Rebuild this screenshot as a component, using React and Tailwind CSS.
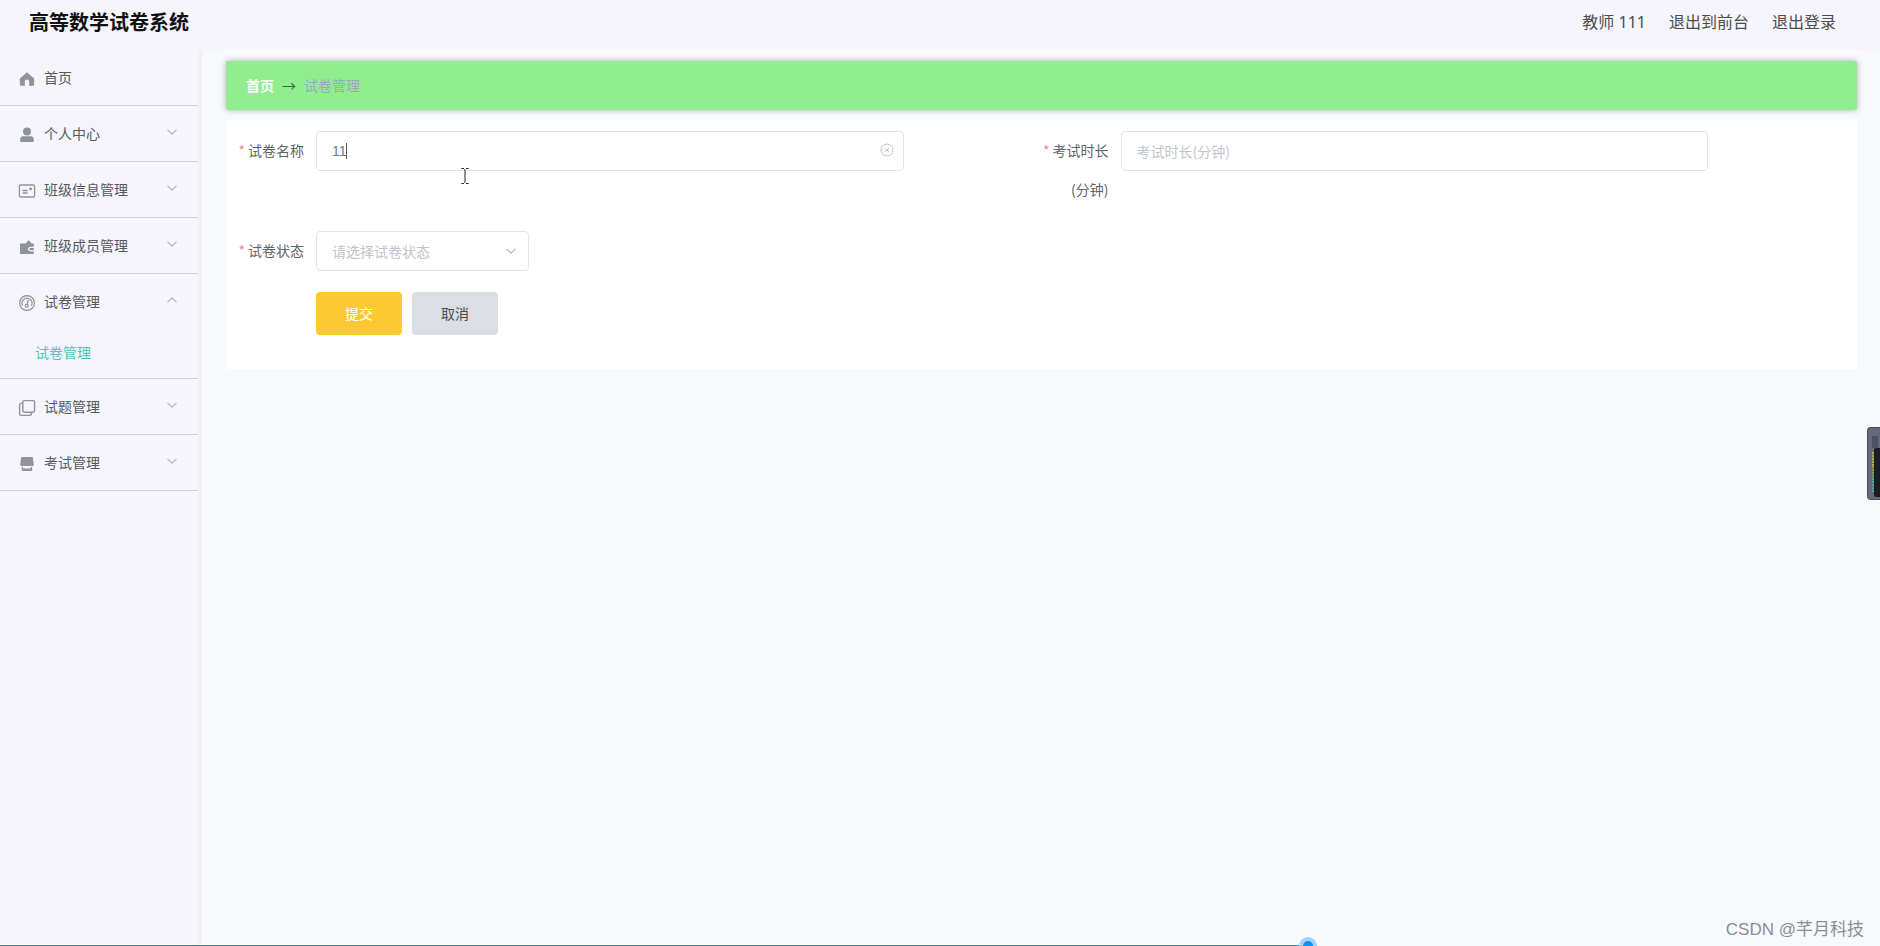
import React from "react";

const icons = {
  home: (
    <path fill="currentColor" d="M9 2.2 1.9 8.4v6.4c0 .7.4 1 1 1h3.9v-4.1c0-1.4.9-2.2 2.2-2.2s2.2.8 2.2 2.2v4.1h3.9c.6 0 1-.3 1-1V8.4z" />
  ),
  user: (
    <g fill="currentColor">
      <circle cx="9" cy="5.4" r="4" />
      <path d="M2.2 13.2c0-1.9 1.3-3 3.2-3h7.2c1.9 0 3.2 1.1 3.2 3v1.5c0 .8-.4 1.2-1.2 1.2H3.4c-.8 0-1.2-.4-1.2-1.2z" />
    </g>
  ),
  card: (
    <g fill="none" stroke="currentColor" strokeWidth="1.3">
      <rect x="1.4" y="3" width="15.2" height="12" rx="1.2" />
      <path d="M4.6 8.5h5M4.6 11h5" />
      <rect x="12" y="6.3" width="1.2" height="1.2" fill="currentColor" />
    </g>
  ),
  wallet: (
    <path
      fill="currentColor"
      fillRule="evenodd"
      d="M2 5.6h5.5L10.6 2.2l3 3v.4H15.8v3.2h-3.2c-1.7 0-2.7 1-2.7 2.3s1 2.3 2.7 2.3h3.2V15c0 .6-.3 1-1 1H3c-.7 0-1-.4-1-1zM12.6 9.9h3.2v2.4h-3.2c-.8 0-1.3-.5-1.3-1.2s.5-1.2 1.3-1.2z"
    />
  ),
  gauge: (
    <g fill="none" stroke="currentColor" strokeWidth="1.2">
      <circle cx="9" cy="9" r="7.4" />
      <path d="M4.7 11.8a5 5 0 1 1 8.6 0" />
      <circle cx="8.7" cy="11.8" r="1.5" />
      <path d="M9.1 10.3 10.3 6" />
    </g>
  ),
  copy: (
    <g fill="none" stroke="currentColor" strokeWidth="1.4">
      <rect x="4.8" y="1.6" width="11.8" height="11.6" rx="1.6" />
      <path d="M4.6 4.4H3.4a1.8 1.8 0 0 0-1.8 1.8v8.4a1.8 1.8 0 0 0 1.8 1.8h8.2a1.8 1.8 0 0 0 1.8-1.8v-1" />
    </g>
  ),
  shop: (
    <g fill="currentColor">
      <path d="M3.3 2h11.4l1.1 7.2c0 1-.6 1.8-1.5 1.8H3.7c-.9 0-1.5-.8-1.5-1.8z" />
      <path d="M3.8 12h1.4v1.5h7.6V12h1.4v3c0 .6-.3.9-.8.9H4.6c-.5 0-.8-.3-.8-.9z" />
    </g>
  ),
};

function Chevron({ up = false, className = "" }) {
  return (
    <svg viewBox="0 0 12 12" className={"h-3 w-3 text-[#b0b3bb] " + className} fill="none" stroke="currentColor" strokeWidth="1.1" aria-hidden="true">
      <path d={up ? "M1.5 8.2 6 3.8l4.5 4.4" : "M1.5 3.8 6 8.2l4.5-4.4"} />
    </svg>
  );
}

const menu = [
  { icon: "home", text: "首页", leaf: true },
  { icon: "user", text: "个人中心" },
  { icon: "card", text: "班级信息管理" },
  { icon: "wallet", text: "班级成员管理" },
  { icon: "gauge", text: "试卷管理", children: ["试卷管理"] },
  { icon: "copy", text: "试题管理" },
  { icon: "shop", text: "考试管理" },
];

function Sidebar() {
  return (
    <nav className="w-[202px] shrink-0 border-r-4 border-[#f0f0f3]">
      <ul>
        {menu.map((item) => (
          <li key={item.text} className="border-b border-[#cfcfd9]">
            <button type="button" aria-expanded={item.leaf ? undefined : Boolean(item.children)} className="flex h-[55px] w-full items-center pr-5 pb-[2px] pl-[18px] text-left text-[#56585d]">
              <svg viewBox="0 0 18 18" className="mt-1 mr-2 h-[18px] w-[18px] text-[#909399]" aria-hidden="true">
                {icons[item.icon]}
              </svg>
              <span className="grow">{item.text}</span>
              {!item.leaf && <Chevron up={Boolean(item.children)} className="mb-[2px]" />}
            </button>
            {item.children?.map((child) => (
              <a key={child} href="#papers" className="flex h-[49px] items-center pb-1 pl-[35px] text-[#4ec5b9]">
                {child}
              </a>
            ))}
          </li>
        ))}
      </ul>
    </nav>
  );
}

function Field({ id, label, children }) {
  return (
    <div className="flex w-[83%]">
      <label htmlFor={id} className="w-20 shrink-0 pr-3 text-right leading-[39px] text-[#606266]">
        <span className="mr-[3px] text-[#f08a8e]">*</span>
        {label}
      </label>
      {children}
    </div>
  );
}

export default function App() {
  return (
    <div className="relative flex min-h-screen flex-col overflow-hidden bg-[#f5f5fb] font-['Noto_Sans_CJK_SC',sans-serif] text-sm">
      <header className="flex h-[50px] items-center justify-between pr-11 pb-[6px] pl-[29px]">
        <h1 className="text-xl font-bold text-[#111114]">高等数学试卷系统</h1>
        <div className="flex gap-[23px] font-['Noto_Sans','Noto_Sans_CJK_SC',sans-serif] text-base text-[#4c4c50]">
          <span>教师 111</span>
          <a href="#front">退出到前台</a>
          <a href="#logout">退出登录</a>
        </div>
      </header>

      <div className="flex grow">
        <Sidebar />
        <main className="grow bg-[#f7f9fd] pt-[11px] pr-[23px] pl-6">
          <nav aria-label="breadcrumb" className="flex h-[49px] items-center gap-2 rounded-xs bg-[#90ee90] px-5 pb-[2px] shadow-[0_0_6px_rgba(0,0,0,0.3)]">
            <a href="#home" className="font-bold text-white">首页</a>
            <span className="text-[#3f6340]">→</span>
            <span className="text-[#97a8be]">试卷管理</span>
          </nav>

          <form className="mt-[10px] bg-white pt-[11px] pr-3 pb-[34px] pl-[10px]" onSubmit={(e) => e.preventDefault()}>
            <div className="grid grid-cols-2 gap-y-[22px]">
              <Field id="name" label="试卷名称">
                <div className="relative grow">
                  <input id="name" defaultValue="11" className="h-10 w-full rounded-sm border border-[#e2e4eb] bg-white px-[15px] font-['Liberation_Sans',sans-serif] text-[#77797e] outline-none" />
                  <span className="absolute top-3 left-[30px] h-4 w-px bg-[#55575c]" />
                  <button type="button" aria-label="清空" className="absolute top-3 right-[10px] text-[#c0c4cc]">
                    <svg viewBox="0 0 14 14" className="h-[14px] w-[14px]" fill="none" stroke="currentColor" aria-hidden="true">
                      <circle cx="7" cy="7" r="6" />
                      <path d="m5 5 4 4M9 5 5 9" />
                    </svg>
                  </button>
                  <svg viewBox="0 0 8 18" className="absolute top-9 left-[145px] h-[18px] w-2" fill="none" stroke="#222" aria-hidden="true">
                    <path d="M.5 1.5h2.5M5 1.5h2.5M4 2v14M.5 16.5h2.5M5 16.5h2.5" />
                  </svg>
                </div>
              </Field>
              <Field id="duration" label="考试时长(分钟)">
                <input id="duration" placeholder="考试时长(分钟)" className="h-10 min-w-0 grow rounded-sm border border-[#e2e4eb] bg-white px-[15px] outline-none placeholder:text-[#c0c4cc]" />
              </Field>
              <Field id="status" label="试卷状态">
                <div className="relative">
                  <select id="status" defaultValue="" className="h-10 w-[213px] appearance-none rounded-sm border border-[#e2e4eb] bg-white px-[15px] text-[#c0c4cc] outline-none">
                    <option value="">请选择试卷状态</option>
                  </select>
                  <Chevron className="pointer-events-none absolute top-[14px] right-3" />
                </div>
              </Field>
            </div>
            <div className="mt-[21px] flex gap-[10px] pl-20">
              <button type="submit" className="h-[43px] w-[86px] rounded-sm bg-[#fdc933] pb-[2px] text-white">提交</button>
              <button type="button" className="h-[43px] w-[86px] rounded-sm bg-[#dcdee5] pb-[2px] text-[#4a4c50]">取消</button>
            </div>
          </form>
        </main>
      </div>

      <p className="absolute right-4 bottom-1 font-['Liberation_Sans','Noto_Sans_CJK_SC',sans-serif] text-[17px] text-[#8c8d91]">CSDN @芊月科技</p>

      <div className="absolute top-[427px] right-0 h-[73px] w-[13px] rounded-l-sm border border-r-0 border-[#4c4f5a] bg-[#656a7b]" aria-hidden="true">
        <svg viewBox="0 0 12 71" className="h-[71px] w-3">
          <path d="M4 8h6v12H4z" fill="#4d5161" />
          <path d="M6 22q0-2 2-2h4v49H8q-2 0-2-2z" fill="#1b1e20" />
          <path d="M5 24v14" stroke="#b8a95a" strokeWidth="2" strokeDasharray="2 1" />
          <path d="M5 38v12" stroke="#7f9a5c" strokeWidth="2" strokeDasharray="2 1" />
          <path d="M5 50v14" stroke="#4ba79c" strokeWidth="2" strokeDasharray="2 1" />
        </svg>
      </div>

      <div className="absolute bottom-0 left-0 h-px w-[69.6%] bg-[#1296f0]">
        <span className="absolute -top-2 -right-[9px] h-[18px] w-[18px] rounded-full border-4 border-[#a0d3fa] bg-[#0d92f4]" />
      </div>
    </div>
  );
}
